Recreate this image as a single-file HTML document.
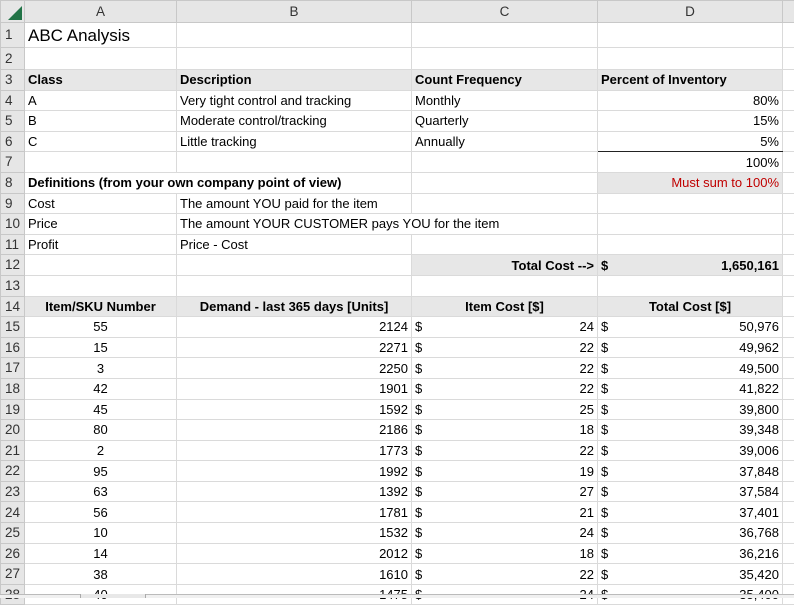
<!DOCTYPE html>
<html><head><style>
*{margin:0;padding:0;box-sizing:border-box}
body{width:794px;height:598px;overflow:hidden;background:#fff;font-family:"Liberation Sans",Arial,sans-serif;font-size:13px;color:#000;position:relative}
table{border-collapse:collapse;table-layout:fixed;position:absolute;left:0;top:0;width:794px}
td{border:1px solid #dadada;padding:0 3px;white-space:nowrap;overflow:visible;line-height:1;vertical-align:middle}
td.h{background:#e6e6e6;color:#333;border-color:#c8c8c8;padding-left:4px;font-size:13.5px}
tr.ch td{background:#e6e6e6;text-align:center;color:#333;font-size:13.5px;border-color:#c8c8c8}
.g{background:#e7e7e7}
.b{font-weight:bold}
.r{text-align:right}
.c{text-align:center}
.dol{display:flex;justify-content:space-between}
.ul{border-bottom:1.5px solid #222}
.red{color:#c00000}
</style></head><body>
<table>
<colgroup><col style="width:24px"><col style="width:152px"><col style="width:235px"><col style="width:186px"><col style="width:185px"><col style="width:12px"></colgroup>
<tr class="ch" style="height:22px"><td style="position:relative"><svg width="16" height="16" style="position:absolute;right:2px;bottom:2px"><polygon points="16,2 16,16 2,16" fill="#217346"/></svg></td><td>A</td><td>B</td><td>C</td><td>D</td><td></td></tr>
<tr style="height:25px"><td class="h">1</td><td style="font-size:17px">ABC Analysis</td><td></td><td></td><td></td><td></td></tr>
<tr style="height:22px"><td class="h">2</td><td></td><td></td><td></td><td></td><td></td></tr>
<tr style="height:20.6px"><td class="h">3</td><td class="g b">Class</td><td class="g b">Description</td><td class="g b">Count Frequency</td><td class="g b">Percent of Inventory</td><td></td></tr>
<tr style="height:20.6px"><td class="h">4</td><td>A</td><td>Very tight control and tracking</td><td>Monthly</td><td class="r">80%</td><td></td></tr>
<tr style="height:20.6px"><td class="h">5</td><td>B</td><td>Moderate control/tracking</td><td>Quarterly</td><td class="r">15%</td><td></td></tr>
<tr style="height:20.6px"><td class="h">6</td><td>C</td><td>Little tracking</td><td>Annually</td><td class="r ul">5%</td><td></td></tr>
<tr style="height:20.6px"><td class="h">7</td><td></td><td></td><td></td><td class="r">100%</td><td></td></tr>
<tr style="height:20.6px"><td class="h">8</td><td class="b" style="border-right:none">Definitions (from your own company point of view)</td><td style="border-left:none"></td><td></td><td class="g r red">Must sum to 100%</td><td></td></tr>
<tr style="height:20.6px"><td class="h">9</td><td>Cost</td><td>The amount YOU paid for the item</td><td></td><td></td><td></td></tr>
<tr style="height:20.6px"><td class="h">10</td><td>Price</td><td style="border-right:none">The amount YOUR CUSTOMER pays YOU for the item</td><td style="border-left:none"></td><td></td><td></td></tr>
<tr style="height:20.6px"><td class="h">11</td><td>Profit</td><td>Price - Cost</td><td></td><td></td><td></td></tr>
<tr style="height:20.6px"><td class="h">12</td><td></td><td></td><td class="g b r">Total Cost --&gt;</td><td class="g b"><div class="dol"><span>$</span><span>1,650,161</span></div></td><td></td></tr>
<tr style="height:20.6px"><td class="h">13</td><td></td><td></td><td></td><td></td><td></td></tr>
<tr style="height:20.6px"><td class="h">14</td><td class="g b c">Item/SKU Number</td><td class="g b c">Demand - last 365 days [Units]</td><td class="g b c">Item Cost [$]</td><td class="g b c">Total Cost [$]</td><td></td></tr>
<tr style="height:20.6px"><td class="h">15</td><td class="c">55</td><td class="r">2124</td><td><div class="dol"><span>$</span><span>24</span></div></td><td><div class="dol"><span>$</span><span>50,976</span></div></td><td></td></tr>
<tr style="height:20.6px"><td class="h">16</td><td class="c">15</td><td class="r">2271</td><td><div class="dol"><span>$</span><span>22</span></div></td><td><div class="dol"><span>$</span><span>49,962</span></div></td><td></td></tr>
<tr style="height:20.6px"><td class="h">17</td><td class="c">3</td><td class="r">2250</td><td><div class="dol"><span>$</span><span>22</span></div></td><td><div class="dol"><span>$</span><span>49,500</span></div></td><td></td></tr>
<tr style="height:20.6px"><td class="h">18</td><td class="c">42</td><td class="r">1901</td><td><div class="dol"><span>$</span><span>22</span></div></td><td><div class="dol"><span>$</span><span>41,822</span></div></td><td></td></tr>
<tr style="height:20.6px"><td class="h">19</td><td class="c">45</td><td class="r">1592</td><td><div class="dol"><span>$</span><span>25</span></div></td><td><div class="dol"><span>$</span><span>39,800</span></div></td><td></td></tr>
<tr style="height:20.6px"><td class="h">20</td><td class="c">80</td><td class="r">2186</td><td><div class="dol"><span>$</span><span>18</span></div></td><td><div class="dol"><span>$</span><span>39,348</span></div></td><td></td></tr>
<tr style="height:20.6px"><td class="h">21</td><td class="c">2</td><td class="r">1773</td><td><div class="dol"><span>$</span><span>22</span></div></td><td><div class="dol"><span>$</span><span>39,006</span></div></td><td></td></tr>
<tr style="height:20.6px"><td class="h">22</td><td class="c">95</td><td class="r">1992</td><td><div class="dol"><span>$</span><span>19</span></div></td><td><div class="dol"><span>$</span><span>37,848</span></div></td><td></td></tr>
<tr style="height:20.6px"><td class="h">23</td><td class="c">63</td><td class="r">1392</td><td><div class="dol"><span>$</span><span>27</span></div></td><td><div class="dol"><span>$</span><span>37,584</span></div></td><td></td></tr>
<tr style="height:20.6px"><td class="h">24</td><td class="c">56</td><td class="r">1781</td><td><div class="dol"><span>$</span><span>21</span></div></td><td><div class="dol"><span>$</span><span>37,401</span></div></td><td></td></tr>
<tr style="height:20.6px"><td class="h">25</td><td class="c">10</td><td class="r">1532</td><td><div class="dol"><span>$</span><span>24</span></div></td><td><div class="dol"><span>$</span><span>36,768</span></div></td><td></td></tr>
<tr style="height:20.6px"><td class="h">26</td><td class="c">14</td><td class="r">2012</td><td><div class="dol"><span>$</span><span>18</span></div></td><td><div class="dol"><span>$</span><span>36,216</span></div></td><td></td></tr>
<tr style="height:20.6px"><td class="h">27</td><td class="c">38</td><td class="r">1610</td><td><div class="dol"><span>$</span><span>22</span></div></td><td><div class="dol"><span>$</span><span>35,420</span></div></td><td></td></tr>
<tr style="height:20.6px"><td class="h">28</td><td class="c">40</td><td class="r">1475</td><td><div class="dol"><span>$</span><span>24</span></div></td><td><div class="dol"><span>$</span><span>35,400</span></div></td><td></td></tr>
</table>
<div style="position:absolute;left:0;top:594px;width:794px;height:4px;background:#f0f0f0;border-top:1px solid #bbb"></div>
<div style="position:absolute;left:80px;top:594px;width:66px;height:4px;background:#e8e8e8;border-left:1px solid #aaa;border-right:1px solid #aaa"></div>
</body></html>
